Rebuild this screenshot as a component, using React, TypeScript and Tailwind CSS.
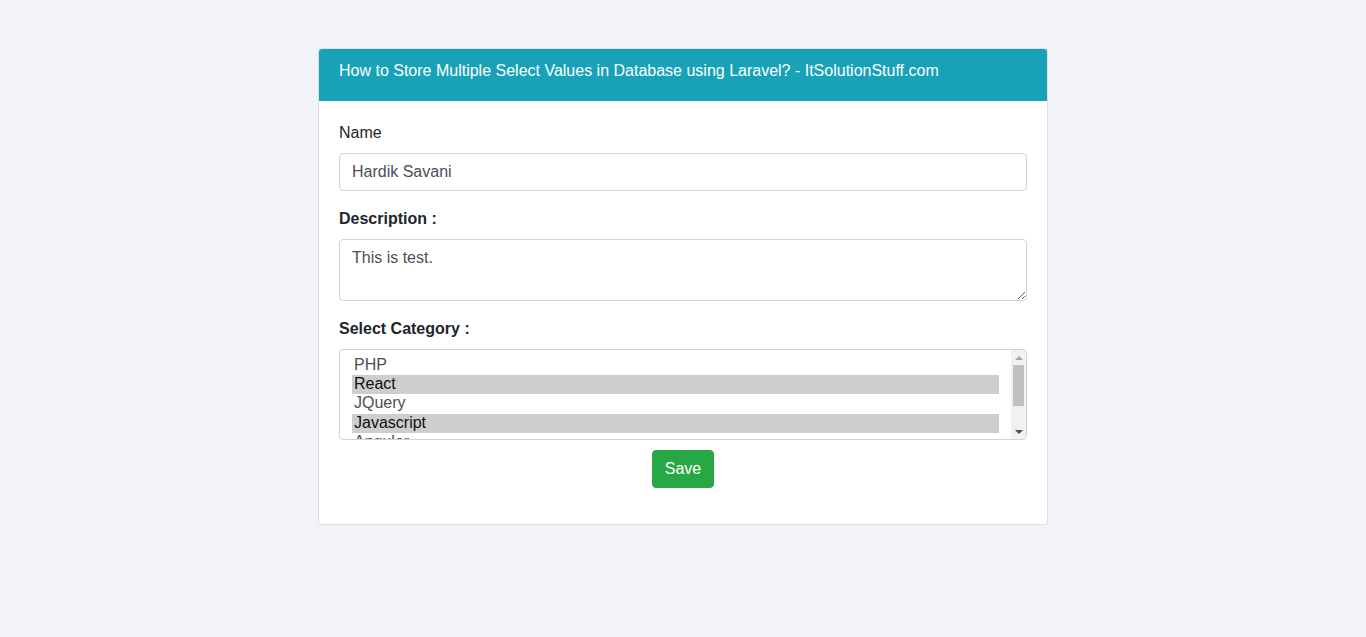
import React from "react";

const categories = ["PHP", "React", "JQuery", "Javascript", "Angular", "Vue"];

const App = () => {
  return (
    <div className="min-h-screen bg-[#f2f3f8] pt-12 font-['Liberation_Sans',Arial,sans-serif] text-base text-[#212529]">
      <div className="mx-auto w-[730px] rounded border border-black/[.125] bg-white">
        <div className="h-[52px] rounded-t-[3px] bg-[#17a2b8] px-5 pt-[10px] leading-6 text-white">
          How to Store Multiple Select Values in Database using Laravel? - ItSolutionStuff.com
        </div>
        <form className="px-5 pt-5 pb-9" onSubmit={(e) => e.preventDefault()}>
          <div className="mb-4">
            <label className="mb-2 block leading-6">Name</label>
            <input
              type="text"
              defaultValue="Hardik Savani"
              className="block h-[38px] w-full rounded border border-[#ced4da] px-3 text-[#495057] outline-none"
            />
          </div>
          <div className="mb-4">
            <label className="mb-2 block font-bold leading-6">Description :</label>
            <textarea
              defaultValue="This is test."
              className="block h-[62px] w-full rounded border border-[#ced4da] px-3 py-[6px] leading-6 text-[#495057] outline-none"
            />
          </div>
          <div>
            <label className="mb-2 block font-bold leading-6">Select Category :</label>
            <div className="flex h-[91px] overflow-hidden rounded border border-[#ced4da]">
              <select
                multiple
                defaultValue={["React", "Javascript"]}
                className="block h-full min-w-0 flex-1 overflow-hidden px-3 py-[6px] text-[#495057] outline-none [scrollbar-width:none]"
              >
                {categories.map((c) => (
                  <option key={c} value={c} className="px-[2px]">
                    {c}
                  </option>
                ))}
              </select>
              {/* fake scrollbar, headless chrome hides the native one */}
              <div className="flex w-[15px] flex-col items-center bg-[#f1f1f1]">
                <div className="flex h-[15px] w-full items-center justify-center">
                  <div className="h-0 w-0 border-x-[4px] border-b-[4px] border-x-transparent border-b-[#a3a3a3]" />
                </div>
                <div className="h-[41px] w-[11px] bg-[#c1c1c1]" />
                <div className="flex-1" />
                <div className="flex h-[15px] w-full items-center justify-center">
                  <div className="h-0 w-0 border-x-[4px] border-t-[4px] border-x-transparent border-t-[#505050]" />
                </div>
              </div>
            </div>
          </div>
          <div className="mt-[10px] text-center">
            <button
              type="submit"
              className="h-[38px] rounded border border-[#28a745] bg-[#28a745] px-3 leading-6 text-white"
            >
              Save
            </button>
          </div>
        </form>
      </div>
    </div>
  );
};

export default App;
